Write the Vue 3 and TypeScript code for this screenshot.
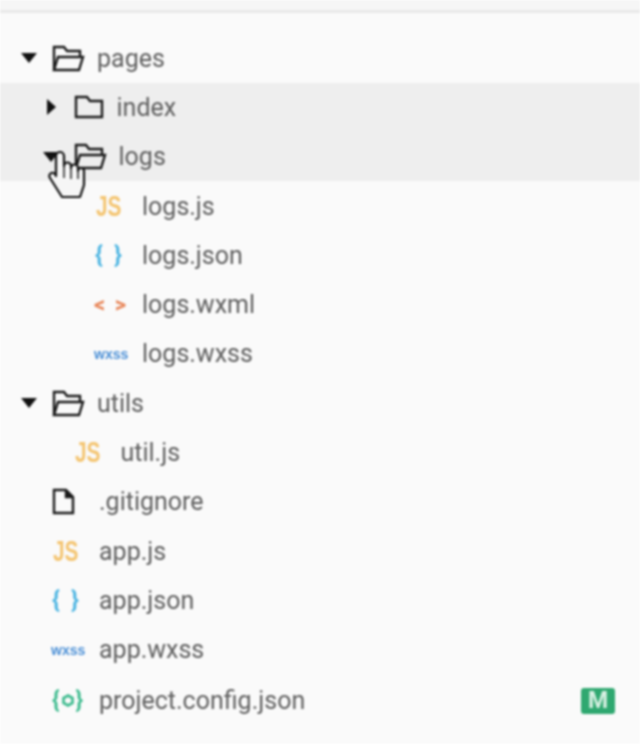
<script setup lang="ts">
type Kind = 'open' | 'closed' | 'js' | 'json' | 'wxml' | 'wxss' | 'file' | 'config'

interface Row {
  name: string
  depth: number
  kind: Kind
  hover?: boolean
  badge?: string
}

const rows: Row[] = [
  { name: 'pages', depth: 0, kind: 'open' },
  { name: 'index', depth: 1, kind: 'closed', hover: true },
  { name: 'logs', depth: 1, kind: 'open', hover: true },
  { name: 'logs.js', depth: 2, kind: 'js' },
  { name: 'logs.json', depth: 2, kind: 'json' },
  { name: 'logs.wxml', depth: 2, kind: 'wxml' },
  { name: 'logs.wxss', depth: 2, kind: 'wxss' },
  { name: 'utils', depth: 0, kind: 'open' },
  { name: 'util.js', depth: 1, kind: 'js' },
  { name: '.gitignore', depth: 0, kind: 'file' },
  { name: 'app.js', depth: 0, kind: 'js' },
  { name: 'app.json', depth: 0, kind: 'json' },
  { name: 'app.wxss', depth: 0, kind: 'wxss' },
  { name: 'project.config.json', depth: 0, kind: 'config', badge: 'M' },
]

const indent = (depth: number) => `${20 + depth * 21.5}px`
</script>

<template>
  <div class="panel">
    <div class="topbar" />
    <ul class="tree">
      <li
        v-for="row in rows"
        :key="row.name"
        class="row"
        :class="{ 'row--hover': row.hover }"
        :style="{ paddingLeft: indent(row.depth) }"
      >
        <span class="arrow">
          <i v-if="row.kind === 'open'" class="tri tri--down" />
          <i v-else-if="row.kind === 'closed'" class="tri tri--right" />
        </span>
        <span class="icon">
          <svg v-if="row.kind === 'open'" width="33" height="27" viewBox="0 0 33 27" fill="none" stroke="#1a1a1a" stroke-width="2.400">
            <path d="M2 25V2h10l3 4h13v6" />
            <path d="M6 12h25l-4 13H2z" />
          </svg>
          <svg v-else-if="row.kind === 'closed'" width="30" height="24" viewBox="0 0 30 24" fill="none" stroke="#1a1a1a" stroke-width="2.400">
            <path d="M2 22V2h11l3 4h12v16z" />
          </svg>
          <svg v-else-if="row.kind === 'file'" width="23" height="27" viewBox="0 0 23 27" fill="none" stroke="#1a1a1a" stroke-width="2.400">
            <path d="M2 2h12l7 7v16H2z" />
            <path d="M14 2v7h7" fill="#1a1a1a" />
          </svg>
          <span v-else-if="row.kind === 'js'" class="glyph glyph--js">JS</span>
          <span v-else-if="row.kind === 'json'" class="glyph glyph--json">{ }</span>
          <span v-else-if="row.kind === 'wxml'" class="glyph glyph--wxml">&lt; &gt;</span>
          <span v-else-if="row.kind === 'wxss'" class="glyph glyph--wxss">wxss</span>
          <span v-else class="glyph glyph--config">{<svg width="12" height="13" viewBox="0 0 12 13" fill="none" stroke="#3dbb8e" stroke-width="2.600"><path d="M6 1.500l4.500 2.500v5L6 11.500 1.500 9V4z" /></svg>}</span>
        </span>
        <span class="label" :class="`label--${row.kind}`">{{ row.name }}</span>
        <span v-if="row.badge" class="badge">{{ row.badge }}</span>
      </li>
    </ul>
    <svg class="hand" width="44" height="54" viewBox="0 0 44 54" stroke="#111" stroke-width="2.200" stroke-linejoin="round" aria-hidden="true">
      <path fill="#f6f6f6" d="M10 8a4 4 0 0 1 8 0v10a3.500 3.500 0 0 1 7 0v2a3.500 3.500 0 0 1 7 0v3a3 3 0 0 1 6 0v14l-4 12H16L4 30a3 3 0 0 1 5-4l1 2z" />
      <path fill="none" stroke-width="1.400" d="M18 18v12M25 20v11M32 23v8" />
    </svg>
  </div>
</template>

<style scoped>
.panel {
  position: relative;
  height: 744px;
  overflow: hidden;
  background: #fafafa;
  font-family: Roboto, "Liberation Sans", sans-serif;
  filter: blur(1px);
}

.topbar {
  height: 10px;
  background: #f6f6f6;
  border-bottom: 3px solid #e9e9e9;
}

.tree {
  list-style: none;
  margin: 20.500px 0 0;
  padding: 0;
}

.row {
  display: flex;
  align-items: center;
  height: 49.300px;
  padding-right: 25px;
}

.row:last-child {
  margin-top: 1.500px;
}

.row--hover {
  background: #eeeeee;
}

.arrow {
  flex: none;
  display: flex;
  align-items: center;
  width: 32px;
}

.tri {
  display: block;
  width: 0;
  height: 0;
}

.tri--down {
  margin-left: 1px;
  border-left: 8px solid transparent;
  border-right: 8px solid transparent;
  border-top: 10px solid #111;
}

.tri--right {
  margin-left: 5px;
  border-top: 8px solid transparent;
  border-bottom: 8px solid transparent;
  border-left: 9px solid #111;
}

.icon {
  flex: none;
  display: flex;
  align-items: center;
  width: 45px;
}

.glyph {
  font-weight: 700;
  white-space: nowrap;
}

.glyph--js {
  display: block;
  margin-left: 1px;
  font-family: "Liberation Sans", sans-serif;
  font-size: 29px;
  font-weight: 700;
  line-height: 1;
  color: #f4c572;
  transform: scaleX(0.72);
  transform-origin: left center;
}

.glyph--json {
  font-size: 24px;
  word-spacing: 5px;
  color: #4db5e2;
}

.glyph--wxml {
  margin-left: -1px;
  font-size: 22px;
  word-spacing: 4px;
  color: #e8875a;
}

.glyph--wxss {
  margin-left: -1px;
  font-family: "Liberation Sans", sans-serif;
  font-size: 14px;
  color: #4a8fd6;
}

.glyph--config {
  display: flex;
  align-items: center;
  gap: 2px;
  font-size: 23px;
  color: #3dbb8e;
}

.label {
  flex: 1;
  font-size: 25px;
  color: #5f5f5f;
  white-space: nowrap;
}

.label--js,
.label--json,
.label--wxml,
.label--wxss,
.label--file,
.label--config {
  margin-left: 2px;
}

.label--closed {
  margin-left: -2px;
}

.badge {
  flex: none;
  width: 34px;
  height: 26px;
  border-radius: 3px;
  background: #2fa870;
  color: #d8f0e3;
  font-size: 23px;
  font-weight: 700;
  line-height: 26px;
  text-align: center;
}

.hand {
  position: absolute;
  left: 46px;
  top: 148px;
}
</style>
